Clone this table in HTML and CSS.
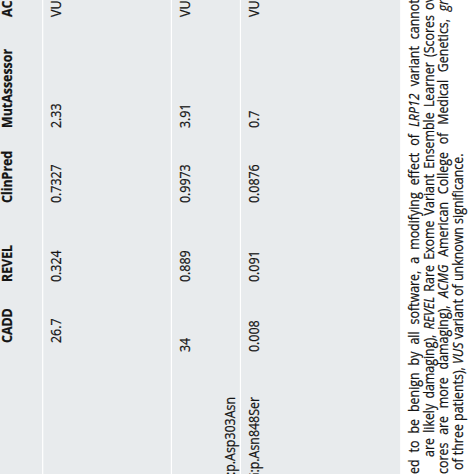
FILE: index.html
```html
<!DOCTYPE html>
<html lang="en">
<head>
<meta charset="utf-8">
<title>Table</title>
<link rel="stylesheet" href="styles.css">
</head>
<body>
<div class="viewport">
  <div class="page">
    <div class="table">
      <div class="row head">
        <div class="cell c0">Variant</div>
        <div class="cell shift">CADD</div>
        <div class="cell">REVEL</div>
        <div class="cell">ClinPred</div>
        <div class="cell">MutAssessor</div>
        <div class="cell">ACMG</div>
      </div>
      <div class="row r1">
        <div class="cell c0"></div>
        <div class="cell shift">26.7</div>
        <div class="cell">0.324</div>
        <div class="cell">0.7327</div>
        <div class="cell">2.33</div>
        <div class="cell">VUS</div>
      </div>
      <div class="row r2">
        <div class="cell c0 bottom">c.907G&gt;A:p.Asp303Asn</div>
        <div class="cell">34</div>
        <div class="cell">0.889</div>
        <div class="cell">0.9973</div>
        <div class="cell">3.91</div>
        <div class="cell">VUS</div>
      </div>
      <div class="row r3">
        <div class="cell c0">c.2543A&gt;G:p.Asn848Ser</div>
        <div class="cell">0.008</div>
        <div class="cell">0.091</div>
        <div class="cell">0.0876</div>
        <div class="cell">0.7</div>
        <div class="cell">VUS</div>
      </div>
    </div>
    <div class="caption">
      <div class="line l1">ed to be benign by all software, a modifying effect of <i>LRP12</i> variant cannot be excluded</div>
      <div class="line l2">are likely damaging), <i>REVEL</i> Rare Exome Variant Ensemble Learner (Scores over 0.5</div>
      <div class="line l3">cores are more damaging), <i>ACMG</i> American College of Medical Genetics, <i>gr</i></div>
      <div class="line l4">of three patients), <i>VUS</i> variant of unknown significance.</div>
    </div>
  </div>
</div>
</body>
</html>
```

FILE: styles.css
```css
html, body {
  margin: 0;
  padding: 0;
  background: #ffffff;
}
body {
  width: 474px;
  height: 474px;
  overflow: hidden;
  font-family: "Open Sans", "Noto Sans", sans-serif;
  color: #141414;
}
.viewport {
  width: 474px;
  height: 474px;
  overflow: hidden;
}
.page {
  width: 474px;
  height: 405.1px;
  overflow: hidden;
  transform-origin: 0 0;
  transform: translate(0, 474px) rotate(-90deg) scale(1, 1.17);
  font-size: 12.4px;
  line-height: 16px;
  -webkit-text-stroke: 0.2px #141414;
}
.table {
  margin: -2.1px 0 0 -100px;
  width: 800px;
  background: #e8ebed;
}
.row {
  display: grid;
  grid-template-columns: 222px 70px 79px 75px 111px 244px;
  box-sizing: border-box;
  border-bottom: 1px solid #ffffff;
  padding-top: 3px;
}
.cell {
  white-space: nowrap;
}
.head {
  height: 38.9px;
  padding-top: 0;
  font-weight: 700;
}
.r1 { height: 110.2px; }
.r2 { height: 59px; }
.r3 { height: 135.9px; border-bottom: 0; }
.shift { padding-left: 9px; }
.c0 {
  text-align: right;
  padding-right: 45px;
}
.head .c0 { visibility: hidden; }
.bottom { align-self: end; }
.caption {
  padding-top: 5.9px;
  line-height: 12.82px;
}
.line { white-space: nowrap; }
.l1 { word-spacing: 3.8px; }
.l2 { padding-left: 17px; word-spacing: 2px; }
.l3 { word-spacing: 4.6px; }
.l4 { padding-left: 4px; }
```
